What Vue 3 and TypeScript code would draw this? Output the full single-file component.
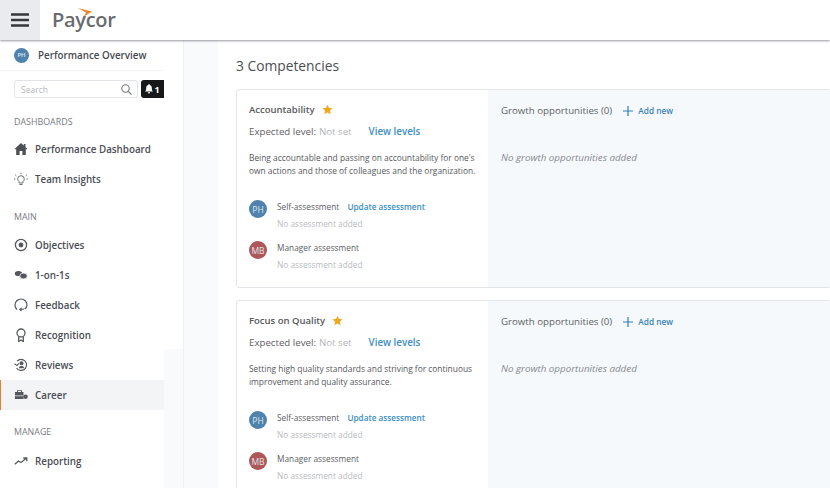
<script setup lang="ts">
interface Item { label: string; icon: string; active?: boolean }
const dashboards: Item[] = [
  { label: 'Performance Dashboard', icon: 'home' },
  { label: 'Team Insights', icon: 'bulb' },
]
const mainItems: Item[] = [
  { label: 'Objectives', icon: 'target' },
  { label: '1-on-1s', icon: 'chat' },
  { label: 'Feedback', icon: 'feedback' },
  { label: 'Recognition', icon: 'award' },
  { label: 'Reviews', icon: 'review' },
  { label: 'Career', icon: 'career', active: true },
]
const manage: Item[] = [{ label: 'Reporting', icon: 'trend' }]
const groups = [
  { title: 'DASHBOARDS', items: dashboards, cls: 'g1' },
  { title: 'MAIN', items: mainItems, cls: 'g2' },
  { title: 'MANAGE', items: manage, cls: 'g3' },
]
const cards = [
  { name: 'Accountability', l1: "Being accountable and passing on accountability for one's", l2: 'own actions and those of colleagues and the organization.' },
  { name: 'Focus on Quality', l1: 'Setting high quality standards and striving for continuous', l2: 'improvement and quality assurance.' },
]
</script>

<template>
  <div class="page">
    <header class="top">
      <button class="burger" aria-label="Menu">
        <svg width="18" height="14" viewBox="0 0 18 14"><path d="M0 1.5h18M0 7h18M0 12.500h18" stroke="#37393c" stroke-width="2.400" /></svg>
      </button>
      <div class="logo">
        <span>Paycor</span>
        <svg class="swoosh" width="15" height="9" viewBox="0 0 15 9"><path d="M0 0 L14 3.500 L6 8.500 L8 4.500 Z" fill="#f0842c" /></svg>
      </div>
    </header>
    <div class="body">
      <aside class="side">
        <div class="overview">
          <span class="av small blue">PH</span>
          <span>Performance Overview</span>
        </div>
        <div class="search-row">
          <div class="search">
            <span>Search</span>
            <svg width="11" height="11" viewBox="0 0 11 11" fill="none" stroke="#777" stroke-width="1.100"><circle cx="4.500" cy="4.500" r="3.700" /><path d="M7.300 7.300 10.500 10.500" /></svg>
          </div>
          <div class="bell">
            <svg width="8" height="10" viewBox="0 0 8 10" fill="#fff"><path d="M4 0a1 1 0 0 1 .7 1C6.200 1.400 6.800 2.600 6.800 4c0 2 .4 2.800 1.200 3.500H0C.8 6.800 1.200 6 1.200 4c0-1.400.6-2.600 2.100-3A1 1 0 0 1 4 0ZM2.800 8.300h2.400A1.200 1.200 0 0 1 2.800 8.300Z" /></svg>
            <span>1</span>
          </div>
        </div>
        <section v-for="g in groups" :key="g.title" :class="['group', g.cls]">
          <h3>{{ g.title }}</h3>
          <a v-for="it in g.items" :key="it.label" :class="['item', { active: it.active }]">
            <span class="ic">
              <svg width="14" height="14" viewBox="0 0 14 14">
                <path v-if="it.icon === 'home'" d="M7 1 0.800 6.800 1.600 7.600 2.200 7.200V13H5.600V9H8.400V13H11.800V7.200L12.400 7.600 13.200 6.800 11.500 5.200V2H9.800V3.600Z" fill="#4d5157" />
                <g v-else-if="it.icon === 'bulb'" fill="none" stroke="#5a5e64" stroke-width=".900">
                  <path d="M5 9.500C4 8.700 3.700 7.800 3.700 7a3.300 3.300 0 0 1 6.600 0c0 .8-.3 1.700-1.300 2.500V11H5ZM5.500 12.500h3M7 0.800v1.400M1.200 2.800 2.300 3.800M12.800 2.800 11.700 3.800M0 7h1.400M12.600 7H14" />
                </g>
                <g v-else-if="it.icon === 'target'">
                  <circle cx="7" cy="7" r="5.600" fill="none" stroke="#55595f" stroke-width="1.300" />
                  <circle cx="7" cy="7" r="2.400" fill="#55595f" />
                </g>
                <g v-else-if="it.icon === 'chat'" fill="#55595f">
                  <ellipse cx="4.500" cy="5.500" rx="3.700" ry="2.600" />
                  <ellipse cx="9.500" cy="8" rx="3.800" ry="2.900" stroke="#fff" stroke-width=".700" />
                </g>
                <g v-else-if="it.icon === 'feedback'" fill="none" stroke="#55595f" stroke-width="1.200">
                  <path d="M3 11.500C1.700 10.400 1 9 1 7a6 6 0 0 1 12 0c0 1.800-.9 3.200-2.300 4.100" />
                  <path d="M10 11 7 11.500M7.500 9.800 5.800 11.500 7.500 13.200" />
                </g>
                <g v-else-if="it.icon === 'award'" fill="none" stroke="#55595f" stroke-width="1.300">
                  <circle cx="7" cy="5" r="4" />
                  <path d="M4.700 8.500V13.500L7 12 9.300 13.500V8.500" />
                </g>
                <g v-else-if="it.icon === 'review'" fill="none" stroke="#55595f" stroke-width="1.100">
                  <path d="M3 3.200A5.500 5.500 0 1 1 2.500 10" />
                  <path d="M0.500 5.800 3 7.600 4.800 5.400" />
                  <circle cx="7.500" cy="5.300" r="1.500" fill="#55595f" />
                  <path d="M5.400 9.800c.3-1.600 3.900-1.600 4.200 0Z" fill="#55595f" />
                </g>
                <g v-else-if="it.icon === 'career'" fill="#55595f">
                  <path fill-rule="evenodd" d="M3 4V2.300h5V4h1.500V7.500H1V4ZM4 4h3V3.100H4Z" />
                  <rect x="1" y="8.200" width="8.500" height="2.800" />
                  <circle cx="11.500" cy="8.800" r="2.300" />
                </g>
                <path v-else d="M0.800 10.300 4.500 7 7 8.500 12 4.500M9.300 4H12.800V7.200" fill="none" stroke="#55595f" stroke-width="1.300" />
              </svg>
            </span>
            <span>{{ it.label }}</span>
          </a>
        </section>
      </aside>
      <div class="gutter"></div>
      <main class="content">
        <h1>3 Competencies</h1>
        <article v-for="c in cards" :key="c.name" class="card">
          <div class="left">
            <div class="name">
              <span>{{ c.name }}</span>
              <svg width="11" height="11" viewBox="0 0 24 24" fill="#eca91f"><path d="M12 1.500 15.300 8.600 23 9.500 17.300 14.800 18.800 22.500 12 18.700 5.200 22.500 6.700 14.800 1 9.500 8.700 8.600Z" /></svg>
            </div>
            <div class="level">
              <span>Expected level:</span>
              <span class="muted">Not set</span>
              <a class="link view">View levels</a>
            </div>
            <p class="desc">{{ c.l1 }}<br />{{ c.l2 }}</p>
            <div class="assess first">
              <span class="av blue">PH</span>
              <div>
                <div class="a-title">Self-assessment <a class="link upd">Update assessment</a></div>
                <div class="a-none">No assessment added</div>
              </div>
            </div>
            <div class="assess">
              <span class="av red">MB</span>
              <div>
                <div class="a-title">Manager assessment</div>
                <div class="a-none">No assessment added</div>
              </div>
            </div>
          </div>
          <div class="right">
            <div class="growth">
              <span>Growth opportunities (0)</span>
              <svg width="10" height="10" viewBox="0 0 10 10"><path d="M5 0v10M0 5h10" stroke="#2f7fb5" stroke-width="1.200" /></svg>
              <a class="add">Add new</a>
            </div>
            <p class="none">No growth opportunities added</p>
          </div>
        </article>
      </main>
    </div>
  </div>
</template>

<style>
html, body { margin: 0; overflow: hidden; background: #fff; }
</style>

<style scoped>
.page { width: 830px; height: 488px; overflow: hidden; font-family: "Open Sans", sans-serif; color: #4a4d52; position: relative; }
.top { height: 40px; display: flex; align-items: stretch; background: #fff; box-shadow: 0 1px 2px rgba(70, 70, 80, .55); position: relative; z-index: 2; }
.burger { width: 40px; border: 0; padding: 0; background: #e9ebee; display: flex; align-items: center; justify-content: center; }
.logo { margin-left: 12px; position: relative; font-family: "Open Sans", sans-serif; font-size: 20px; color: #6a6b6e; line-height: 40px; font-weight: 600; letter-spacing: -.3px; }
.swoosh { position: absolute; left: 26px; top: 8px; }
.body { display: flex; height: 448px; }
.side { width: 183px; flex: none; border-right: 1px solid #eff0f2; background: linear-gradient(#fff, #fff) no-repeat 0 0 / 183px 309px, linear-gradient(#fff, #fff) no-repeat 0 0 / 164px 100%, #f9fafb; }
.overview { width: 164px; box-sizing: border-box; height: 31px; display: flex; align-items: center; gap: 9px; padding: 0 0 0 14px; font-size: 9.800px; font-weight: 600; border-bottom: 1px solid #f3f3f5; color: #474a50; }
.av { width: 18px; height: 18px; border-radius: 50%; color: #dfe6ee; display: inline-flex; align-items: center; justify-content: center; font-size: 8.500px; flex: none; }
.av.small { width: 15px; height: 15px; font-size: 6px; }
.blue { background: #4f82ad; }
.red { background: #ae5758; }
.search-row { display: flex; align-items: center; margin: 9px 0 0 14px; width: 150px; gap: 3px; }
.search { flex: none; box-sizing: border-box; width: 124px; height: 18px; border: 1px solid #e2e3e6; border-radius: 3px; display: flex; align-items: center; justify-content: space-between; padding: 0 5px 0 6px; font-size: 8.500px; color: #b5b7ba; }
.bell { flex: none; width: 23px; height: 18px; box-sizing: border-box; background: #17181a; border-radius: 3px 0 0 3px; color: #fff; display: flex; align-items: center; justify-content: center; gap: 1px; font-size: 9px; font-weight: 700; }
.group { width: 164px; }
.group h3 { margin: 0; padding-left: 14px; font-size: 8.900px; line-height: 12px; font-weight: 400; color: #777b81; }
.g1 { margin-top: 18px; }
.g2 { margin-top: 17px; }
.g3 { margin-top: 16px; }
.g1 h3 { margin-bottom: 6px; }
.g2 h3 { margin-bottom: 7px; }
.g3 h3 { margin-bottom: 8px; }
.item { height: 30px; display: flex; align-items: center; padding-left: 14px; gap: 7px; font-size: 9.800px; font-weight: 600; color: #4a4d55; box-sizing: border-box; }
.ic { width: 14px; height: 14px; display: flex; }
.item.active { background: #f3f4f5; border-left: 1px solid #f07a2c; padding-left: 13px; }
.gutter { width: 34px; flex: none; background: #f9fafb; }
.content { flex: 1; padding: 0 0 0 18px; min-width: 0; background: #fff; }
h1 { margin: 16px 0 0; font-size: 13.800px; line-height: 20px; font-weight: 400; color: #4c4e52; }
.card { margin: 13px -1px 12px 0; height: 199px; box-sizing: border-box; border: 1px solid #e3e5e8; border-radius: 3px; display: flex; }
.card + .card { margin-top: 0; }
.left { width: 251px; flex: none; box-sizing: border-box; padding: 13px 0 0 12px; }
.right { flex: 1; background: #f6f9fc; padding: 14px 0 0 13px; }
.name { display: flex; align-items: center; gap: 7px; font-size: 9.500px; font-weight: 600; color: #55585c; line-height: 13px; }
.level { margin-top: 9px; display: flex; font-size: 9.700px; line-height: 13px; color: #5f6266; }
.muted { margin-left: 3px; color: #b3b5b8; }
.link { color: #3b8ec6; }
.view { margin-left: 17px; font-weight: 600; font-size: 9.800px; }
.desc { margin: 13px 0 0; font-size: 8.400px; line-height: 13px; color: #55585c; white-space: nowrap; }
.assess { display: flex; gap: 10px; align-items: flex-start; margin-top: 10px; height: 31px; }
.assess.first { margin-top: 24px; }
.assess > .av { margin-top: -1px; }
.a-title { font-size: 8.300px; line-height: 12px; color: #5b5e62; }
.upd { margin-left: 6px; font-weight: 600; font-size: 8.200px; }
.a-none { margin-top: 5px; font-size: 8.300px; line-height: 12px; color: #b9bbbe; }
.growth { display: flex; align-items: center; font-size: 9.700px; line-height: 13px; color: #5c5f63; }
.growth svg { margin-left: 11px; }
.add { margin-left: 5px; font-size: 8.300px; font-weight: 600; color: #3a83b8; }
.none { margin: 34px 0 0; font-size: 9.800px; line-height: 13px; font-style: italic; color: #85888c; }
</style>
